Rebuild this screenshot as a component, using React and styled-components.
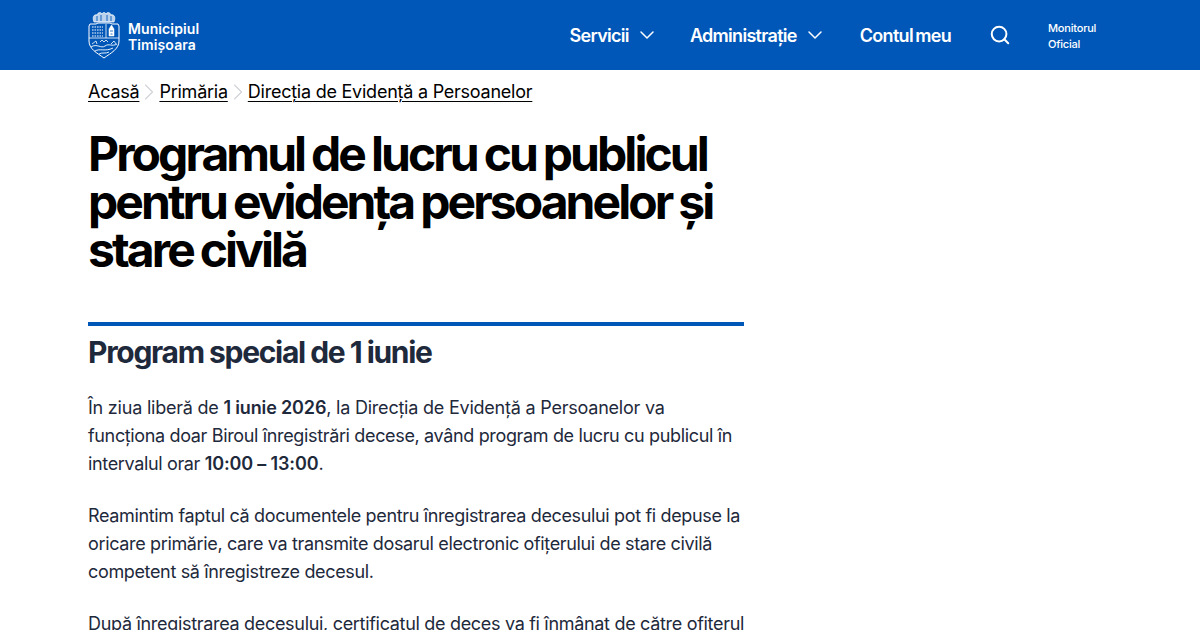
import React from "react";
import styled, { createGlobalStyle } from "styled-components";
import { ChevronDown, ChevronRight, Search } from "lucide-react";

const Global = createGlobalStyle`
  html, body { margin: 0; padding: 0; background: #fff; overflow: hidden; height: 630px; }
  body { font-family: Inter, "Liberation Sans", sans-serif; }
  * { box-sizing: border-box; }
`;
const Header = styled.header`
  height: 70px; background: #0057b8; color: #fff;
  display: flex; align-items: center; padding: 0 88px;
`;
const Brand = styled.a`
  display: flex; align-items: center; gap: 8px; margin-right: auto; color: #fff;
`;
const BrandText = styled.div`
  font-size: 14px; line-height: 16px; font-weight: 600; letter-spacing: 0.1px; padding-top: 4px;
`;
const Nav = styled.nav`display: flex; align-items: center;`;
const NavItem = styled.a`
  display: flex; align-items: center; gap: 6px;
  font-size: 18px; font-weight: 600; letter-spacing: -0.7px; word-spacing: -1.5px; color: #fff;
  margin-right: ${p => p.$mr}px;
`;
const SearchButton = styled.button`
  all: unset; display: flex; margin-right: 37px; color: #fff;
`;
const Monitor = styled.a`
  font-size: 11px; line-height: 16px; font-weight: 500; letter-spacing: -0.2px; color: #fff; width: 64px; padding-top: 2px;
`;
const Main = styled.main`padding: 0 88px;`;
const Crumbs = styled.div`
  display: flex; align-items: center; height: 43px;
  font-size: 18px; letter-spacing: -0.24px; color: #000;
`;
const Crumb = styled.a`
  color: #000; text-decoration: underline; text-underline-offset: 3px;
  text-decoration-thickness: 1px;
`;
const CrumbSep = styled(ChevronRight)`
  margin: 0 -4px; color: #d0d3d7; flex: none;
`;
const Title = styled.h1`
  margin: 17px 0 48px; width: 680px;
  font-size: 48px; line-height: 48px; font-weight: 700; letter-spacing: -2.95px; word-spacing: -1.5px; color: #000;
`;
const Content = styled.article`
  width: 656px; border-top: 4px solid #0057b8; padding-top: 8px;
`;
const Heading = styled.h2`
  margin: 0 0 24px; font-size: 30px; line-height: 36px; font-weight: 700;
  letter-spacing: -1.3px; word-spacing: -0.5px; color: #1e293b;
`;
const Para = styled.p`
  margin: 0 0 24px; font-size: 18px; line-height: 28px; letter-spacing: -0.35px; color: #1e293b;
  b { font-weight: 600; letter-spacing: -0.15px; }
`;
const WideRun = styled.span`letter-spacing: -0.22px;`;
const LastPara = styled(Para)`white-space: nowrap; letter-spacing: -0.31px;`;

const Logo = () => (
  <svg width="32" height="48" viewBox="0 0 32 48" fill="none" stroke="#fff">
    <path d="M6 11 C4 6 6 3 9 4 C10 1 13 1 14 3 C15 1 17 1 18 3 C19 1 22 1 23 4 C26 3 28 6 26 11 Z" fill="#dbe7f6" fillOpacity=".85" strokeWidth=".7" />
    <path d="M9 5 V10 M13 4 V10 M19 4 V10 M23 5 V10" stroke="#0057b8" strokeWidth=".9" />
    <path d="M2 13 H8 L10 12 H22 L24 13 H30 L31 15 V30 C31 38 23 42 16 47 C9 42 1 38 1 30 V15 Z" strokeWidth="1" />
    <path d="M1 27 H31 M18 13 V27" strokeWidth=".8" />
    <path d="M4 16 H15 M4 19 H15 M4 22 H15 M4 25 H15" strokeWidth="1.1" strokeDasharray="1.6 .9" />
    <path d="M21 25 V18 L23.5 14 L26 18 V25 Z" fill="#fff" strokeWidth=".5" />
    <path d="M22 20 H25 M22.5 23 H24.5" stroke="#0057b8" strokeWidth=".8" />
    <path d="M4 33 L8 30 L9 33 M12 31 L14 29 L16 31 L18 29 L20 31 M23 33 L26 30 L28 33" strokeWidth=".8" />
    <path d="M3 36 C9 32 13 38 17 35 C21 32 24 36 29 33 M7 40 C12 37 17 41 25 37 M11 43 C14 41 18 43 21 41" strokeWidth=".9" />
  </svg>
);

export default function App() {
  return (
    <>
      <Global />
      <Header>
        <Brand>
          <Logo />
          <BrandText>Municipiul<br />Timișoara</BrandText>
        </Brand>
        <Nav>
          <NavItem $mr={31}>Servicii <ChevronDown size={24} strokeWidth={1.5} /></NavItem>
          <NavItem $mr={33}>Administrație <ChevronDown size={24} strokeWidth={1.5} /></NavItem>
          <NavItem $mr={38}>Contul meu</NavItem>
          <SearchButton><Search size={22} strokeWidth={2.2} /></SearchButton>
          <Monitor>Monitorul<br />Oficial</Monitor>
        </Nav>
      </Header>
      <Main>
        <Crumbs>
          <Crumb>Acasă</Crumb>
          <CrumbSep size={28} strokeWidth={1} />
          <Crumb>Primăria</Crumb>
          <CrumbSep size={28} strokeWidth={1} />
          <Crumb>Direcția de Evidență a Persoanelor</Crumb>
        </Crumbs>
        <Title>Programul de lucru cu publicul pentru evidența persoanelor și stare civilă</Title>
        <Content>
          <Heading>Program special de 1 iunie</Heading>
          <Para><WideRun>În ziua liberă de <b>1 iunie 2026</b>, la Direcția de Evidență a Persoanelor va</WideRun> funcționa doar Biroul înregistrări decese, având program de lucru cu publicul în intervalul orar <b>10:00 – 13:00</b>.</Para>
          <Para>Reamintim faptul că documentele pentru înregistrarea decesului pot fi depuse la oricare primărie, care va transmite dosarul electronic ofițerului de stare civilă competent să înregistreze decesul.</Para>
          <LastPara>După înregistrarea decesului, certificatul de deces va fi înmânat de către ofițerul</LastPara>
        </Content>
      </Main>
    </>
  );
}
